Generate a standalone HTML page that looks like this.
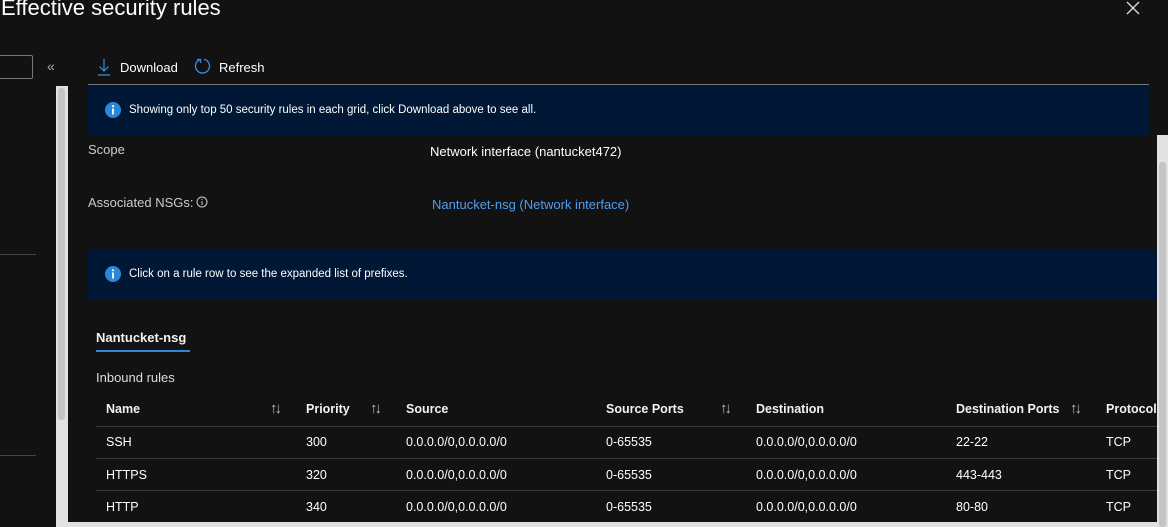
<!DOCTYPE html>
<html><head><meta charset="utf-8"><style>
*{margin:0;padding:0;box-sizing:border-box}
body{width:1168px;height:527px;background:#121212;overflow:hidden;position:relative;font-family:"Liberation Sans",sans-serif;color:#fff;font-size:12.5px}
.a{position:absolute;white-space:nowrap}
.hdr{font-weight:bold;color:#f2f2f2}
.line{position:absolute;height:1px;background:#3b3b3b}
.sort{position:absolute;color:#bbb;font-size:15px;letter-spacing:-3px}
</style></head><body>
<div class="a" style="left:1px;top:-5px;font-size:22px;color:#fff">Effective security rules</div>
<svg class="a" style="left:1126px;top:1px" width="14" height="14" viewBox="0 0 14 14"><path d="M1 1L13 13M13 1L1 13" stroke="#ddd" stroke-width="1.3"/></svg>
<div class="a" style="left:-2px;top:55px;width:35px;height:24px;border:1px solid #777;border-radius:2px"></div>
<div class="a" style="left:47px;top:58px;color:#aaa;font-size:14px">«</div>
<div class="line" style="left:0;top:254px;width:36px;background:#444"></div>
<div class="line" style="left:0;top:455px;width:36px;background:#444"></div>
<div class="a" style="left:56px;top:86px;width:12px;height:441px;background:#e1e1e1"></div>
<div class="a" style="left:58px;top:88px;width:7px;height:332px;background:#c4c4c4;border-radius:3px"></div>
<div class="a" style="left:68px;top:522px;width:1100px;height:5px;background:#e1e1e1"></div>
<div class="a" style="left:1157px;top:135px;width:11px;height:392px;background:#e1e1e1"></div>
<div class="a" style="left:1159px;top:162px;width:7px;height:365px;background:#c4c4c4;border-radius:3px"></div>
<svg class="a" style="left:97px;top:58px" width="14" height="18" viewBox="0 0 14 18"><path d="M7 1V13M2.5 8.5L7 13L11.5 8.5M1 17H13" stroke="#3a8ee6" stroke-width="1.2" fill="none"/></svg>
<div class="a" style="left:120px;top:60px;font-size:13px">Download</div>
<svg class="a" style="left:194px;top:57px" width="18" height="18" viewBox="0 0 18 18"><path d="M6 2.5A7 7 0 1 0 10 2.2M3 2.5H6.5V6" stroke="#3a8ee6" stroke-width="1.3" fill="none"/></svg>
<div class="a" style="left:219px;top:60px;font-size:13px">Refresh</div>
<div class="a" style="left:88px;top:84px;width:1061px;height:1px;background:#777"></div>
<div class="a" style="left:88px;top:85px;width:1061px;height:50px;background:#001835"></div>
<svg class="a" style="left:105px;top:102px" width="16" height="16" viewBox="0 0 16 16"><circle cx="8" cy="8" r="8" fill="#2b88d8"/><rect x="7.1" y="6.5" width="1.8" height="6" fill="#fff"/><circle cx="8" cy="4.2" r="1.1" fill="#fff"/></svg>
<div class="a" style="left:129px;top:104px;font-size:11.5px">Showing only top 50 security rules in each grid, click Download above to see all.</div>
<div class="a" style="left:88px;top:142px;color:#ccc;font-size:13px">Scope</div>
<div class="a" style="left:430px;top:144px;font-size:13px">Network interface (nantucket472)</div>
<div class="a" style="left:88px;top:195px;color:#ccc;font-size:13px">Associated NSGs:</div>
<svg class="a" style="left:196px;top:196px" width="12" height="12" viewBox="0 0 12 12"><circle cx="6" cy="6" r="5" stroke="#ccc" fill="none"/><path d="M6 5V9M6 3V4" stroke="#ccc"/></svg>
<div class="a" style="left:432px;top:197px;color:#4f9ef0;font-size:13px">Nantucket-nsg (Network interface)</div>
<div class="a" style="left:88px;top:249px;width:1069px;height:50px;background:#001835"></div>
<svg class="a" style="left:105px;top:266px" width="16" height="16" viewBox="0 0 16 16"><circle cx="8" cy="8" r="8" fill="#2b88d8"/><rect x="7.1" y="6.5" width="1.8" height="6" fill="#fff"/><circle cx="8" cy="4.2" r="1.1" fill="#fff"/></svg>
<div class="a" style="left:129px;top:268px;font-size:11.5px">Click on a rule row to see the expanded list of prefixes.</div>
<div class="a hdr" style="left:96px;top:330px;font-size:13px">Nantucket-nsg</div>
<div class="a" style="left:96px;top:350px;width:94px;height:2px;background:#2b88d8"></div>
<div class="a" style="left:96px;top:370px;color:#ddd;font-size:13px">Inbound rules</div>
<div class="a hdr" style="left:106px;top:402px">Name</div>
<div class="sort" style="left:270px;top:400px">↑↓</div>
<div class="a hdr" style="left:306px;top:402px">Priority</div>
<div class="sort" style="left:370px;top:400px">↑↓</div>
<div class="a hdr" style="left:406px;top:402px">Source</div>
<div class="a hdr" style="left:606px;top:402px">Source Ports</div>
<div class="sort" style="left:720px;top:400px">↑↓</div>
<div class="a hdr" style="left:756px;top:402px">Destination</div>
<div class="a hdr" style="left:956px;top:402px">Destination Ports</div>
<div class="sort" style="left:1070px;top:400px">↑↓</div>
<div class="a hdr" style="left:1106px;top:402px">Protocol</div>
<div class="line" style="left:96px;top:426px;width:1061px"></div>
<div class="line" style="left:96px;top:458px;width:1061px"></div>
<div class="line" style="left:96px;top:490px;width:1061px"></div>
<div class="a" style="left:106px;top:435px">SSH</div><div class="a" style="left:306px;top:435px">300</div><div class="a" style="left:406px;top:435px">0.0.0.0/0,0.0.0.0/0</div><div class="a" style="left:606px;top:435px">0-65535</div><div class="a" style="left:756px;top:435px">0.0.0.0/0,0.0.0.0/0</div><div class="a" style="left:956px;top:435px">22-22</div><div class="a" style="left:1106px;top:435px">TCP</div>
<div class="a" style="left:106px;top:468px">HTTPS</div><div class="a" style="left:306px;top:468px">320</div><div class="a" style="left:406px;top:468px">0.0.0.0/0,0.0.0.0/0</div><div class="a" style="left:606px;top:468px">0-65535</div><div class="a" style="left:756px;top:468px">0.0.0.0/0,0.0.0.0/0</div><div class="a" style="left:956px;top:468px">443-443</div><div class="a" style="left:1106px;top:468px">TCP</div>
<div class="a" style="left:106px;top:500px">HTTP</div><div class="a" style="left:306px;top:500px">340</div><div class="a" style="left:406px;top:500px">0.0.0.0/0,0.0.0.0/0</div><div class="a" style="left:606px;top:500px">0-65535</div><div class="a" style="left:756px;top:500px">0.0.0.0/0,0.0.0.0/0</div><div class="a" style="left:956px;top:500px">80-80</div><div class="a" style="left:1106px;top:500px">TCP</div>
</body></html>
